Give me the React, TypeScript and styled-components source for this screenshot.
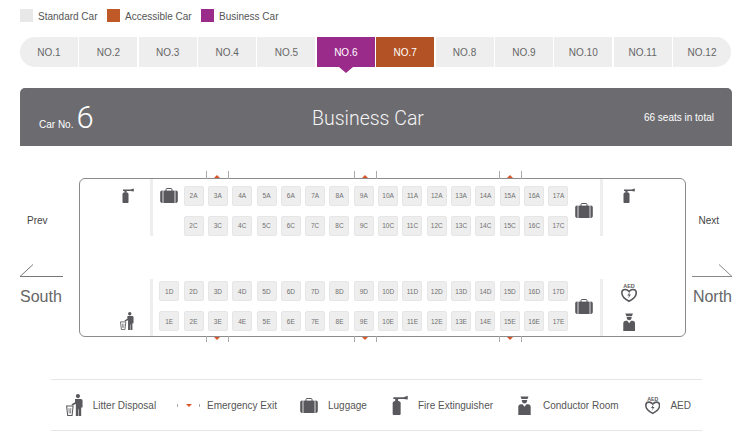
import styled, { createGlobalStyle } from "styled-components";

const GlobalStyle = createGlobalStyle`
  body {
    margin: 0;
    background: #fff;
    font-family: "Liberation Sans", Arial, sans-serif;
    color: #555;
  }
`;

const ICON = "#59585c";
const ORANGE = "#d9562a";

const cars = [1, 2, 3, 4, 5, 6, 7, 8, 9, 10, 11, 12];
const seatNumbers = [2, 3, 4, 5, 6, 7, 8, 9, 10, 11, 12, 13, 14, 15, 16, 17];
const exits = [127, 275, 420];

const Page = styled.div`
  width: 750px;
  height: 441px;
  overflow: hidden;
  padding-top: 9px;
  box-sizing: border-box;
`;

const Legend = styled.div`
  display: flex;
  align-items: center;
  height: 13px;
  padding-left: 20px;
`;

const LegendItem = styled.div<{ $width: number }>`
  display: flex;
  align-items: center;
  gap: 5px;
  width: ${(p) => p.$width}px;
  font-size: 10px;
  color: #555;

  span:last-child {
    padding-top: 2px;
  }
`;

const Swatch = styled.i<{ $color: string }>`
  width: 13px;
  height: 13px;
  background: ${(p) => p.$color};
`;

const Tabs = styled.div`
  display: grid;
  grid-template-columns: repeat(12, 1fr);
  gap: 1.4px;
  width: 711px;
  height: 30px;
  margin: 15px 0 0 20px;
`;

const Tab = styled.div<{ $color?: string; $arrow?: boolean }>`
  position: relative;
  display: flex;
  align-items: center;
  justify-content: center;
  font-size: 10px;
  color: ${(p) => (p.$color ? "#fff" : "#666")};
  background: ${(p) => p.$color ?? "#eeeeee"};

  &:first-child {
    border-radius: 15px 0 0 15px;
  }
  &:last-child {
    border-radius: 0 15px 15px 0;
  }
  &::after {
    content: "";
    display: ${(p) => (p.$arrow ? "block" : "none")};
    position: absolute;
    left: 50%;
    top: 100%;
    margin-left: -7px;
    border-style: solid;
    border-width: 6px 7px 0;
    border-color: ${(p) => p.$color} transparent transparent;
  }
`;

const CarHeader = styled.div`
  display: grid;
  grid-template-columns: 273px auto 1fr;
  align-items: center;
  width: 712px;
  height: 58px;
  margin: 21px 0 0 20px;
  padding: 0 18px 0 19px;
  box-sizing: border-box;
  background: #6c6b70;
  border-radius: 5px 5px 0 0;
  color: #fff;
`;

const CarNo = styled.div`
  display: flex;
  align-items: baseline;
  gap: 3px;
  font-size: 10px;
  margin-top: 1px;

  strong {
    font-family: Roboto, "Liberation Sans", sans-serif;
    font-weight: 300;
    font-size: 31px;
    line-height: 30px;
  }
`;

const CarTitle = styled.div`
  font-family: Roboto, "Liberation Sans", sans-serif;
  font-weight: 300;
  font-size: 19.5px;
  color: #f4f4f4;
  padding-top: 2px;
`;

const SeatTotal = styled.div`
  justify-self: end;
  font-size: 10px;
`;

const PlanRow = styled.div`
  display: flex;
  margin: 32px 0 0 20px;
`;

const Side = styled.div<{ $width: number; $next?: boolean }>`
  display: flex;
  flex-direction: column;
  width: ${(p) => p.$width}px;
  padding-top: 37px;
  align-items: ${(p) => (p.$next ? "flex-end" : "flex-start")};
`;

const SideLink = styled.div<{ $inset: string }>`
  font-size: 10px;
  line-height: 12px;
  color: #444;
  margin: ${(p) => p.$inset};
`;

const Compass = styled.svg`
  display: block;
  margin-top: 37px;
`;

const SideName = styled.div`
  font-size: 16px;
  line-height: 18px;
  color: #666;
  margin-top: 11px;
`;

const Plan = styled.div`
  position: relative;
  display: flex;
  width: 607px;
  height: 159px;
  box-sizing: border-box;
  border: 1.5px solid #8b8b8b;
  border-radius: 6px;
`;

const Cab = styled.div<{ $right?: boolean }>`
  display: flex;
  flex-direction: column;
  justify-content: space-between;
  box-sizing: border-box;
  ${(p) =>
    p.$right
      ? "flex: 1; align-items: center; padding: 8.5px 29px 5px 0;"
      : "width: 69.5px; align-items: flex-end; padding: 8.5px 16px 6px 0;"}
`;

const CabStack = styled.div`
  display: flex;
  flex-direction: column;
  align-items: center;
  gap: 11px;
`;

const Partition = styled.div`
  display: flex;
  flex-direction: column;
  justify-content: space-between;
  width: 3px;

  span {
    height: 57px;
    background: #eeeeee;
  }
`;

const Deck = styled.div`
  display: flex;
  flex-direction: column;
  justify-content: space-between;
  width: 447px;
  box-sizing: border-box;
  padding: 6.5px 0 5px 6.7px;
`;

const SeatBlock = styled.div`
  display: grid;
  grid-template-columns: repeat(17, 20px) 20px;
  grid-template-rows: 20px 20px;
  column-gap: 4.33px;
  row-gap: 10px;
`;

const Seat = styled.div`
  display: flex;
  align-items: center;
  justify-content: center;
  box-sizing: border-box;
  background: #eeeeee;
  border: 1px solid #e6e6e6;
  border-radius: 2px;
  font-size: 6.5px;
  color: #707070;
`;

const RackLeft = styled.div`
  display: flex;
  align-items: center;
  justify-content: center;
`;

const RackRight = styled.div`
  grid-column: 18;
  grid-row: 1 / 3;
  display: flex;
  align-items: center;
  justify-content: flex-end;
`;

const Exit = styled.div<{ $left: number; $bottom?: boolean }>`
  position: absolute;
  left: ${(p) => p.$left}px;
  ${(p) =>
    p.$bottom
      ? "top: 100%; height: 6px; align-items: flex-start; padding-top: 1px;"
      : "bottom: 100%; height: 8px; align-items: flex-end; padding-bottom: 1px;"}
  display: flex;
  justify-content: center;
  width: 23px;
  box-sizing: border-box;
  border-left: 1px solid #aaa;
  border-right: 1px solid #aaa;
`;

const Arrowhead = styled.span<{ $up?: boolean }>`
  width: 0;
  height: 0;
  border-style: solid;
  border-color: transparent;
  border-width: ${(p) => (p.$up ? "0 3px 3px" : "3px 3px 0")};
  border-bottom-color: ${(p) => (p.$up ? ORANGE : "transparent")};
  border-top-color: ${(p) => (p.$up ? "transparent" : ORANGE)};
`;

const Key = styled.div`
  display: grid;
  grid-template-columns: 111px 123px 92px 126px 127px 46px;
  align-items: center;
  width: 651px;
  height: 52px;
  margin: 42px 0 0 51px;
  padding-left: 15px;
  box-sizing: border-box;
  border-top: 1.5px solid #e6e6e6;
  border-bottom: 1.5px solid #e6e6e6;
`;

const KeyItem = styled.div<{ $gap: number }>`
  display: flex;
  align-items: center;
  gap: ${(p) => p.$gap}px;
  font-size: 10px;
  color: #555;
`;

const KeyExit = styled.span`
  display: flex;
  align-items: center;
  justify-content: center;
  width: 23px;
  height: 3px;
  box-sizing: border-box;
  border-left: 1px solid #aaa;
  border-right: 1px solid #aaa;
`;

const Extinguisher = ({ h = 15 }: { h?: number }) => (
  <svg width={(h * 12) / 15} height={h} viewBox="0 0 12 15" style={{ display: "block" }}>
    <path d="M.5 6.200c0-1 .8-1.700 1.700-1.700h2.600c.9 0 1.700.7 1.700 1.700V14c0 .6-.4 1-1 1h-4c-.6 0-1-.4-1-1z" fill={ICON} />
    <rect x="2.400" y="2.400" width="2.200" height="2.400" fill={ICON} />
    <path d="M1 1.600h7.600L11.800.6v2.800L8.600 3H1z" fill={ICON} />
  </svg>
);

const Luggage = ({ w = 18 }: { w?: number }) => (
  <svg width={w} height={(w * 15) / 18} viewBox="0 0 18 15" style={{ display: "block" }}>
    <path d="M6 3V1.400C6 .8 6.500.5 7 .5h4c.5 0 1 .3 1 .9V3" stroke={ICON} strokeWidth="1" fill="none" />
    <path d="M.2 4.500C.2 3.400 1 2.600 2 2.600h.6V15H2C1 15 .2 14.200.2 13.100z" fill={ICON} />
    <rect x="3.400" y="2.600" width="11.200" height="12.400" fill={ICON} />
    <path d="M17.800 4.500c0-1.100-.8-1.900-1.800-1.900h-.6V15h.6c1 0 1.800-.8 1.800-1.900z" fill={ICON} />
  </svg>
);

const Litter = ({ h = 18 }: { h?: number }) => (
  <svg width={(h * 16) / 21} height={h} viewBox="0 0 16 21" style={{ display: "block" }}>
    <circle cx="11.400" cy="2" r="2" fill={ICON} />
    <path d="M8.600 4.800h5.600c.9 0 1.600.7 1.600 1.600V13h-1.300v8h-2.200v-6.500h-.5V21H9.400V9.500L5.800 11l-.5-1.100 3.300-2z" fill={ICON} />
    <path d="M.6 11.500h6.200l-1 9H1.600z" fill="none" stroke={ICON} strokeWidth="1" />
    <path d="M2.800 13.500l.3 5M4.600 13.500l-.3 5" stroke={ICON} strokeWidth=".7" />
  </svg>
);

const Conductor = ({ h = 18 }: { h?: number }) => (
  <svg width={(h * 13) / 19} height={h} viewBox="0 0 13 19" style={{ display: "block" }}>
    <path d="M2.500.6h8l-1 2.500h-6z" fill={ICON} />
    <path d="M3.800 4h5.400c0 2.200-1 3.600-2.700 3.600S3.800 6.200 3.800 4z" fill={ICON} />
    <path d="M.3 11c0-1.600 1.100-2.700 2.700-2.700h1.600l1.900 2.400 1.900-2.400H10c1.600 0 2.700 1.100 2.700 2.700v8H.3z" fill={ICON} />
  </svg>
);

const Aed = ({ h = 18 }: { h?: number }) => (
  <svg width={(h * 17) / 19} height={h} viewBox="0 0 17 19" style={{ display: "block" }}>
    <text x="8.500" y="4.600" textAnchor="middle" fontSize="5.800" fontWeight="700" fontFamily="Liberation Sans, sans-serif" fill={ICON}>
      AED
    </text>
    <path
      d="M8.500 18.200C3.800 15.700.9 12.700.9 9.400.9 7.200 2.500 5.800 4.300 5.800c1.800 0 3.200.8 4.200 2 1-1.200 2.400-2 4.200-2 1.800 0 3.400 1.400 3.400 3.600 0 3.300-2.900 6.300-7.600 8.800z"
      fill="none"
      stroke={ICON}
      strokeWidth="1.700"
    />
    <path d="M9.600 8.200L6.600 12.200h1.900l-1 3.200 3-4.200H8.600z" fill={ICON} />
  </svg>
);

function SeatRow({ row, first }: { row: string; first?: boolean }) {
  return (
    <>
      {first && <Seat>1{row}</Seat>}
      {seatNumbers.map((n) => (
        <Seat key={n}>
          {n}
          {row}
        </Seat>
      ))}
    </>
  );
}

export default function App() {
  return (
    <Page>
      <GlobalStyle />
      <Legend>
        <LegendItem $width={87}>
          <Swatch $color="#e8e8e8" />
          <span>Standard Car</span>
        </LegendItem>
        <LegendItem $width={94}>
          <Swatch $color="#bf5a28" />
          <span>Accessible Car</span>
        </LegendItem>
        <LegendItem $width={90}>
          <Swatch $color="#9b2b8a" />
          <span>Business Car</span>
        </LegendItem>
      </Legend>

      <Tabs>
        {cars.map((n) => (
          <Tab
            key={n}
            $color={n === 6 ? "#9b2b8a" : n === 7 ? "#b35325" : undefined}
            $arrow={n === 6}
          >
            NO.{n}
          </Tab>
        ))}
      </Tabs>

      <CarHeader>
        <CarNo>
          Car No. <strong>6</strong>
        </CarNo>
        <CarTitle>Business Car</CarTitle>
        <SeatTotal>66 seats in total</SeatTotal>
      </CarHeader>

      <PlanRow>
        <Side $width={59}>
          <SideLink $inset="0 0 0 7px">Prev</SideLink>
          <Compass width="43" height="13" viewBox="0 0 43 13">
            <path d="M0 12.500h43M0 12.500L13 .5" stroke="#777" strokeWidth="1" fill="none" />
          </Compass>
          <SideName>South</SideName>
        </Side>

        <Plan>
          {exits.map((x) => (
            <Exit key={x} $left={x - 1.5}>
              <Arrowhead $up />
            </Exit>
          ))}
          {exits.map((x) => (
            <Exit key={x} $left={x - 1.5} $bottom>
              <Arrowhead />
            </Exit>
          ))}

          <Cab>
            <Extinguisher />
            <Litter />
          </Cab>
          <Partition>
            <span />
            <span />
          </Partition>
          <Deck>
            <SeatBlock>
              <RackLeft>
                <Luggage />
              </RackLeft>
              <SeatRow row="A" />
              <RackRight>
                <Luggage />
              </RackRight>
              <div />
              <SeatRow row="C" />
            </SeatBlock>
            <SeatBlock>
              <SeatRow row="D" first />
              <RackRight>
                <Luggage />
              </RackRight>
              <SeatRow row="E" first />
            </SeatBlock>
          </Deck>
          <Partition>
            <span />
            <span />
          </Partition>
          <Cab $right>
            <Extinguisher />
            <CabStack>
              <Aed />
              <Conductor />
            </CabStack>
          </Cab>
        </Plan>

        <Side $width={46} $next>
          <SideLink $inset="0 13px 0 0">Next</SideLink>
          <Compass width="40" height="13" viewBox="0 0 40 13">
            <path d="M40 12.500H0M40 12.500L27 .5" stroke="#888" strokeWidth="1" fill="none" />
          </Compass>
          <SideName>North</SideName>
        </Side>
      </PlanRow>

      <Key>
        <KeyItem $gap={10}>
          <Litter h={22} />
          Litter Disposal
        </KeyItem>
        <KeyItem $gap={7}>
          <KeyExit>
            <Arrowhead />
          </KeyExit>
          Emergency Exit
        </KeyItem>
        <KeyItem $gap={10}>
          <Luggage />
          Luggage
        </KeyItem>
        <KeyItem $gap={10}>
          <Extinguisher h={20} />
          Fire Extinguisher
        </KeyItem>
        <KeyItem $gap={12}>
          <Conductor h={19} />
          Conductor Room
        </KeyItem>
        <KeyItem $gap={10}>
          <Aed h={19} />
          AED
        </KeyItem>
      </Key>
    </Page>
  );
}
